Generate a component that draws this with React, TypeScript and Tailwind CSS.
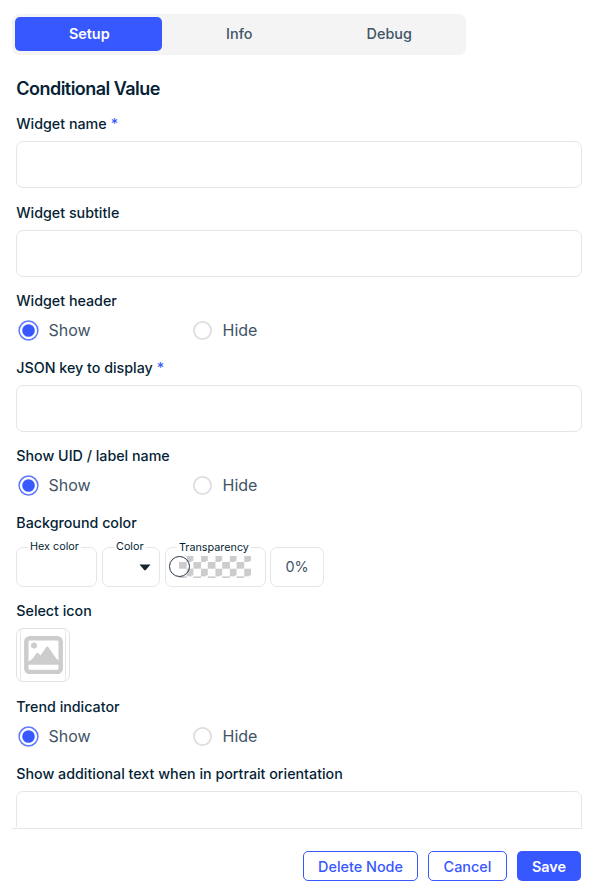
import { useState } from 'react';

const tabs = ['Setup', 'Info', 'Debug'];

function Label({ text, required }: { text: string; required?: boolean }) {
  return (
    <div className="h-5 pl-[0.3px] text-[14.27px] leading-5 font-medium text-[#061f36] whitespace-nowrap">
      {text}
      {required && <span className="ml-1 text-[#3858ff]">*</span>}
    </div>
  );
}

function TextField({ label, required }: { label: string; required?: boolean }) {
  return (
    <div>
      <Label text={label} required={required} />
      <input
        type="text"
        className="mt-[7px] block h-[47px] w-full rounded-[7px] border border-[#e6e6e6] px-3 text-base text-[#425466] outline-none"
      />
    </div>
  );
}

function RadioOption({ label, checked, onSelect }: { label: string; checked: boolean; onSelect: () => void }) {
  return (
    <button onClick={onSelect} className="flex h-5 w-[174px] items-center text-left">
      <svg width="22" height="22" viewBox="0 0 22 22" className="ml-px shrink-0" fill="none">
        {checked ? (
          <>
            <circle cx="11.5" cy="11.5" r="9.4" stroke="#5c77ff" strokeWidth="1.5" />
            <circle cx="11.5" cy="11.5" r="6.3" fill="#3858ff" />
          </>
        ) : (
          <circle cx="11.5" cy="11.5" r="8.6" stroke="#dddde2" strokeWidth="1.8" />
        )}
      </svg>
      <span className="ml-[9.5px] text-base leading-5 text-[#425466]">{label}</span>
    </button>
  );
}

function ShowHide({ label }: { label: string }) {
  const [value, setValue] = useState('Show');

  return (
    <div className="pb-1">
      <Label text={label} />
      <div className="mt-[9px] flex">
        {['Show', 'Hide'].map((option) => (
          <RadioOption
            key={option}
            label={option}
            checked={value === option}
            onSelect={() => setValue(option)}
          />
        ))}
      </div>
    </div>
  );
}

function BackgroundColor() {
  return (
    <div>
      <Label text="Background color" />
      <div className="mt-[7px] flex h-[47px] items-end gap-[5px]">
        <fieldset className="h-[47px] w-[81px] rounded-[7px] border border-[#e6e6e6] pl-[11px]">
          <legend className="h-[14px] px-[2px] text-[10.8px] leading-[13px] text-[#061f36] whitespace-nowrap">Hex color</legend>
        </fieldset>
        <fieldset className="h-[47px] w-[58px] rounded-[7px] border border-[#e6e6e6] pl-[11px]">
          <legend className="h-[14px] px-[2px] text-[10.8px] leading-[13px] text-[#061f36] whitespace-nowrap">Color</legend>
          <svg width="12" height="7" viewBox="0 0 12 7" className="mt-[10px] ml-[24.5px]">
            <path d="M0.5 0.5h11L6.8 6a1.1 1.1 0 0 1-1.6 0z" fill="#17252f" />
          </svg>
        </fieldset>
        <fieldset className="h-[47px] w-[101px] rounded-[7px] border border-[#e6e6e6] px-[11px]">
          <legend className="h-[14px] px-[2px] text-[10.8px] leading-[15px] text-[#061f36] whitespace-nowrap">Transparency</legend>
          <div className="relative mt-[2px] ml-[2px] h-[22px] w-[72px] bg-[conic-gradient(#cccccc_25%,#ffffff_0_50%,#cccccc_0_75%,#ffffff_0)] bg-[length:14.4px_14.4px] bg-[position:0_-1.7px]">
            <div className="absolute top-0 -left-[10px] size-[21px] rounded-full border border-[#26364a]" />
          </div>
        </fieldset>
        <div className="-ml-px flex h-10 w-[54px] items-center justify-center rounded-[7px] border border-[#e6e6e6] text-[14.4px] text-[#425466]">
          0%
        </div>
      </div>
    </div>
  );
}

function IconPicker() {
  return (
    <div className="pb-px">
      <Label text="Select icon" />
      <button className="mt-[7px] flex size-[54px] items-center justify-center rounded-[7px] border border-[#e2e2e2] px-[3px]">
        <span className="flex h-full w-full items-center justify-center rounded-[3px] border-x border-[#e6e6e6]">
          <svg width="39" height="38" viewBox="0 0 39 38" className="shrink-0">
            <rect x="2.3" y="2.2" width="34.400" height="33.800" rx="3.5" fill="none" stroke="#cccccc" strokeWidth="4.4" />
            <circle cx="10" cy="9.5" r="3" fill="#cccccc" />
            <path
              d="M3.500 28.700V25.500c4-.5 6-4 8.600-7.700q1.400-1.900 2.800 0l1.600 1.800 5.500-8.200q1.300-1.800 2.600 0L31.500 21.500q1.800 2.800 4 3v4.200z"
              fill="#cccccc"
            />
          </svg>
        </span>
      </button>
    </div>
  );
}

export default function App() {
  const [activeTab, setActiveTab] = useState('Setup');

  return (
    <div className="flex h-[890px] w-[590px] flex-col overflow-hidden bg-white pt-[14px] font-[Inter,sans-serif]">
      <div className="ml-3 flex h-[41px] w-[454px] shrink-0 gap-[3px] rounded-[7px] bg-[#f4f4f4] p-[3px] pb-1">
        {tabs.map((tab) => (
          <button
            key={tab}
            onClick={() => setActiveTab(tab)}
            className={`h-[34px] w-[147px] shrink-0 rounded-[5px] pl-[1.5px] text-[14.4px] ${
              activeTab === tab ? 'bg-[#3858ff] font-semibold text-white' : 'font-medium text-[#425466]'
            }`}
          >
            {tab}
          </button>
        ))}
      </div>

      <div className="ml-3 h-[774px] w-[570px] shrink-0 border-b border-[#e6e6e6] pl-1">
        <div className="h-[772px] overflow-hidden">
          <h1 className="mt-[22px] pl-[0.3px] text-[18px] leading-6 font-semibold tracking-[-0.53px] text-[#061f36]">
            Conditional Value
          </h1>
          <div className="mt-[13px] flex flex-col gap-[14px]">
            <div className="pb-px">
              <TextField label="Widget name" required />
            </div>
            <TextField label="Widget subtitle" />
            <ShowHide label="Widget header" />
            <TextField label="JSON key to display" required />
            <ShowHide label="Show UID / label name" />
            <BackgroundColor />
            <IconPicker />
            <ShowHide label="Trend indicator" />
            <TextField label="Show additional text when in portrait orientation" />
          </div>
        </div>
      </div>

      <div className="mt-[22px] mr-[9px] flex justify-end gap-[10px]">
        <button className="h-[30px] w-[115px] rounded-[5px] border border-[#3858ff] pt-[2px] text-[14.4px] font-medium text-[#3858ff]">
          Delete Node
        </button>
        <button className="h-[30px] w-[79px] rounded-[5px] border border-[#3858ff] pt-[2px] text-[14.4px] font-medium text-[#3858ff]">
          Cancel
        </button>
        <button className="h-[30px] w-[64px] rounded-[5px] bg-[#3858ff] pt-[2px] text-[14.4px] font-semibold text-white">
          Save
        </button>
      </div>
    </div>
  );
}
